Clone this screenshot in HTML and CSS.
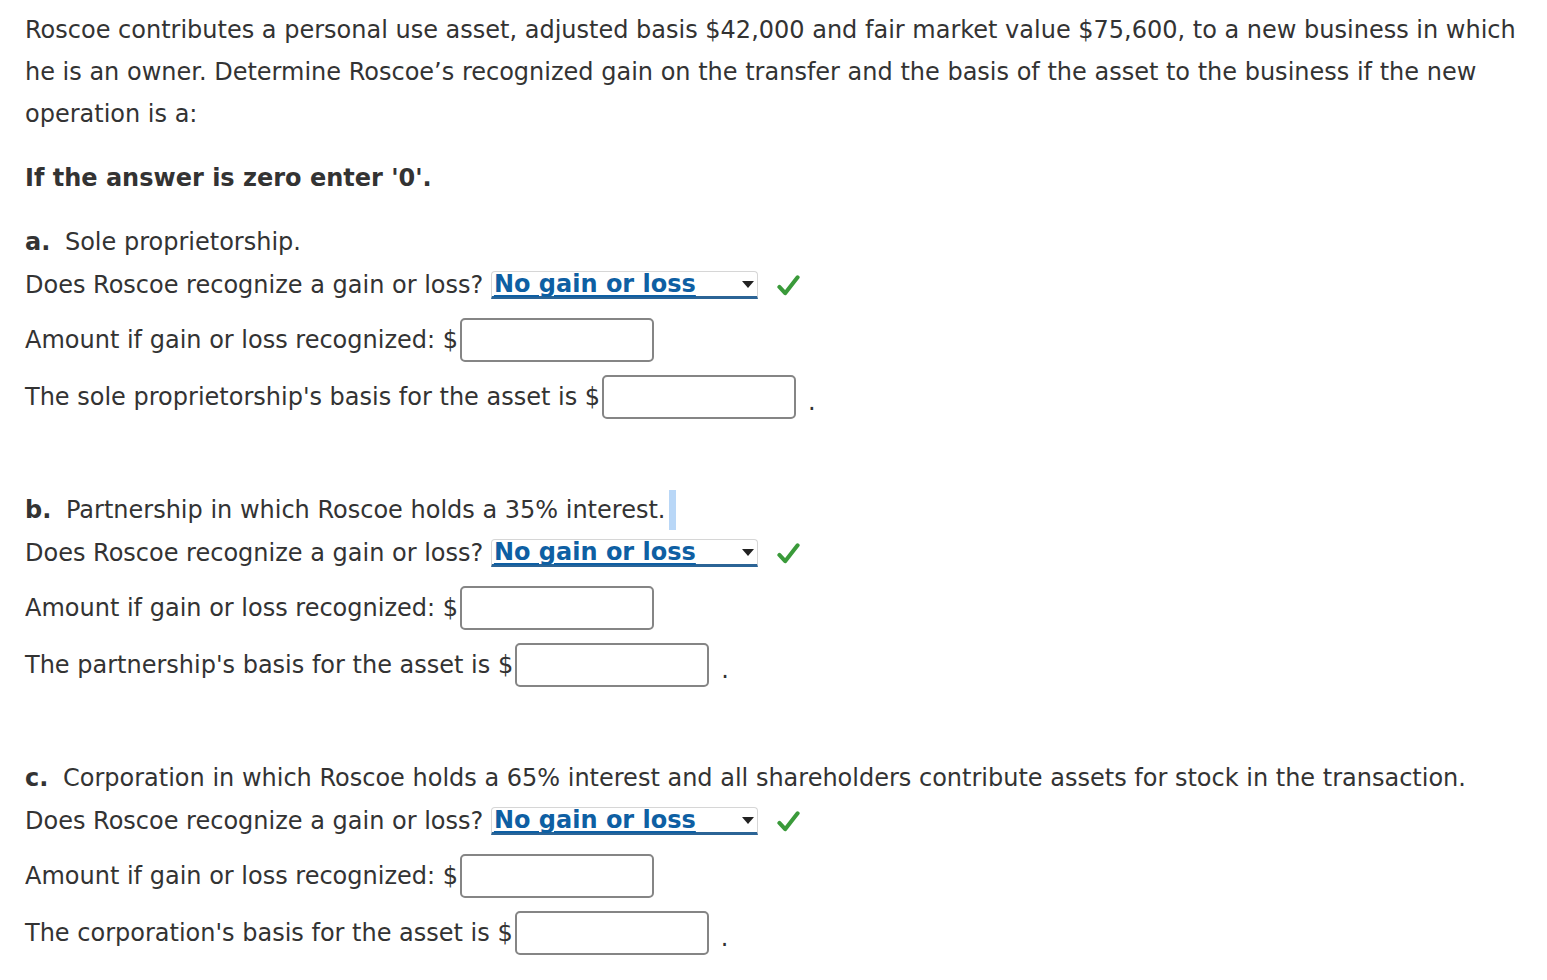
FILE: index.html
```html
<!DOCTYPE html>
<html>
<head>
<meta charset="utf-8">
<link rel="stylesheet" href="styles.css">
</head>
<body>
<div class="page">
  <p class="intro">Roscoe contributes a personal use asset, adjusted basis $42,000 and fair market value $75,600, to a new business in which he is an owner. Determine Roscoe’s recognized gain on the transfer and the basis of the asset to the business if the new operation is a:</p>
  <p class="note">If the answer is zero enter '0'.</p>

  <div class="part">
    <div class="head"><b>a.</b> Sole proprietorship.</div>
    <div class="row q">Does Roscoe recognize a gain or loss? <span class="select"><span class="sel-text">No gain or loss</span><span class="arrow"></span></span><svg class="check" viewBox="0 0 24 24" width="23" height="23"><path d="M2.5 13.5 L8.5 20 L21.5 3.5" fill="none" stroke="#3a9a3a" stroke-width="4.2" stroke-linecap="round" stroke-linejoin="round"/></svg></div>
    <div class="row amt">Amount if gain or loss recognized: $<span class="input"></span></div>
    <div class="row basis">The sole proprietorship's basis for the asset is $<span class="input"></span><span class="dot">.</span></div>
  </div>

  <div class="part">
    <div class="head"><b>b.</b> Partnership in which Roscoe holds a 35% interest.<span class="caret"></span></div>
    <div class="row q">Does Roscoe recognize a gain or loss? <span class="select"><span class="sel-text">No gain or loss</span><span class="arrow"></span></span><svg class="check" viewBox="0 0 24 24" width="23" height="23"><path d="M2.5 13.5 L8.5 20 L21.5 3.5" fill="none" stroke="#3a9a3a" stroke-width="4.2" stroke-linecap="round" stroke-linejoin="round"/></svg></div>
    <div class="row amt">Amount if gain or loss recognized: $<span class="input"></span></div>
    <div class="row basis">The partnership's basis for the asset is $<span class="input"></span><span class="dot">.</span></div>
  </div>

  <div class="part">
    <div class="head"><b>c.</b> Corporation in which Roscoe holds a 65% interest and all shareholders contribute assets for stock in the transaction.</div>
    <div class="row q">Does Roscoe recognize a gain or loss? <span class="select"><span class="sel-text">No gain or loss</span><span class="arrow"></span></span><svg class="check" viewBox="0 0 24 24" width="23" height="23"><path d="M2.5 13.5 L8.5 20 L21.5 3.5" fill="none" stroke="#3a9a3a" stroke-width="4.2" stroke-linecap="round" stroke-linejoin="round"/></svg></div>
    <div class="row amt">Amount if gain or loss recognized: $<span class="input"></span></div>
    <div class="row basis">The corporation's basis for the asset is $<span class="input"></span><span class="dot">.</span></div>
  </div>
</div>
</body>
</html>
```

FILE: styles.css
```css
html, body {
  margin: 0;
  padding: 0;
  background: #ffffff;
}
body {
  font-family: "DejaVu Sans", Verdana, sans-serif;
  font-size: 24px;
  color: #333333;
}
.page {
  padding: 9px 8px 0 25px;
}
p {
  margin: 0;
}
.intro {
  line-height: 42px;
}
.note {
  font-weight: bold;
  margin-top: 22px;
  line-height: 42px;
}
.part {
  margin-top: 22px;
}
.part + .part {
  margin-top: 70px;
}
.head {
  line-height: 42px;
  display: flex;
  align-items: center;
  white-space: pre;
}
.head b {
  margin-right: 7px;
}
.caret {
  display: inline-block;
  width: 7px;
  height: 40px;
  background: #b9d7f7;
  margin-left: 4px;
}
.row {
  display: flex;
  align-items: center;
  white-space: pre;
}
.q {
  height: 44px;
}
.amt {
  height: 44px;
  margin-top: 11px;
}
.basis {
  height: 44px;
  margin-top: 13px;
}
.select {
  display: inline-flex;
  align-items: center;
  justify-content: space-between;
  width: 267px;
  height: 28px;
  box-sizing: border-box;
  border: 1px solid #d6d6d6;
  border-bottom: 3px solid #2b6496;
  border-radius: 4px 4px 0 0;
  padding: 0 3px 0 2px;
}
.sel-text {
  color: #0e5fa3;
  font-weight: bold;
  text-decoration: underline;
  text-underline-offset: 3px;
  line-height: 24px;
}
.arrow {
  width: 0;
  height: 0;
  border-left: 6px solid transparent;
  border-right: 6px solid transparent;
  border-top: 7px solid #222;
}
.check {
  margin-left: 19px;
}
.input {
  display: inline-block;
  width: 194px;
  height: 44px;
  box-sizing: border-box;
  border: 2px solid #858585;
  border-radius: 5px;
  background: #fff;
  margin-left: 2px;
}
.dot {
  margin-left: 12px;
  margin-top: 10px;
}
```
